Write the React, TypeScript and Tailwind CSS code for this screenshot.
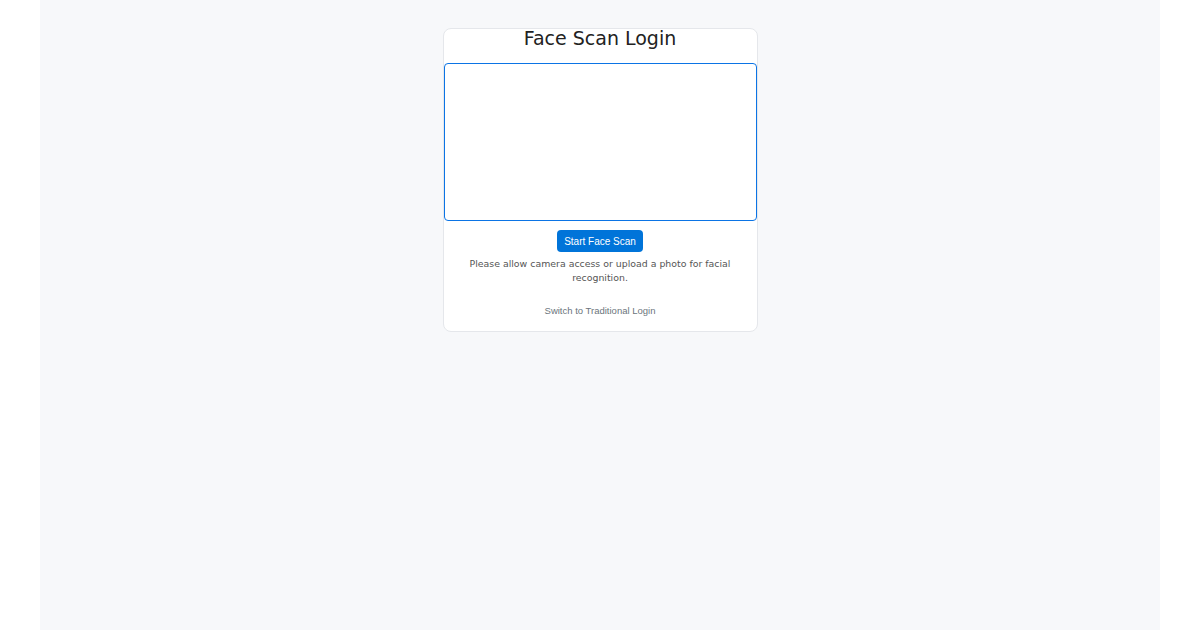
import React from "react";

export default function App() {
  return (
    <div className="min-h-[630px] bg-white px-10">
      <div className="min-h-[630px] bg-[#f7f8fa] pt-7 font-['DejaVu_Sans',sans-serif]">
        <div className="mx-auto w-[315px] rounded-lg border border-[#e5e7eb] bg-white pb-[10px] text-center">
          <h2 className="text-[19px] leading-[18px] text-[#222]">Face Scan Login</h2>
          <div className="mt-[16px] h-[158px] w-full rounded border border-[#0b74e5] bg-white" />
          <button
            type="button"
            className="mt-[9px] h-[22px] rounded-sm bg-[#0074d9] px-[7px] font-['Liberation_Sans',sans-serif] text-[10px] text-white"
          >
            Start Face Scan
          </button>
          <p className="mx-auto mt-[5px] w-[290px] text-[9.4px] leading-[14px] text-[#555]">
            Please allow camera access or upload a photo for facial recognition.
          </p>
          <button
            type="button"
            className="mt-[19px] font-['Liberation_Sans',sans-serif] text-[9.5px] text-[#6c757d]"
          >
            Switch to Traditional Login
          </button>
        </div>
      </div>
    </div>
  );
}
